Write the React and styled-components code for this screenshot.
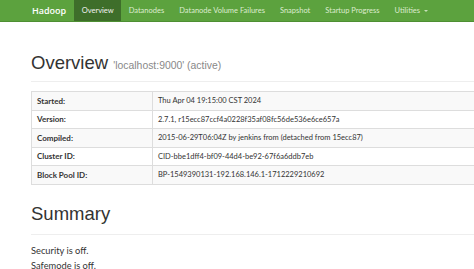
import styled, { createGlobalStyle } from "styled-components";

const Global = createGlobalStyle`
  body {
    margin: 0;
    background: #fff;
    overflow: hidden;
    font-family: Lato, "Open Sans", sans-serif;
  }
`;

const navItems = [
  "Overview",
  "Datanodes",
  "Datanode Volume Failures",
  "Snapshot",
  "Startup Progress",
];

const info = [
  ["Started:", "Thu Apr 04 19:15:00 CST 2024"],
  ["Version:", "2.7.1, r15ecc87ccf4a0228f35af08fc56de536e6ce657a"],
  ["Compiled:", "2015-06-29T06:04Z by jenkins from (detached from 15ecc87)"],
  ["Cluster ID:", "CID-bbe1dff4-bf09-44d4-be92-67f6a6ddb7eb"],
  ["Block Pool ID:", "BP-1549390131-192.168.146.1-1712229210692"],
];

function App() {
  return (
    <>
      <Global />
      <Navbar>
        <Brand>Hadoop</Brand>
        {navItems.map((item, i) => (
          <NavLink key={item} $active={i === 0}>
            {item}
          </NavLink>
        ))}
        <NavLink>
          Utilities <Caret />
        </NavLink>
      </Navbar>
      <Page>
        <PageHeader>
          <Title>
            Overview <small>'localhost:9000' (active)</small>
          </Title>
        </PageHeader>
        <InfoTable>
          <tbody>
            {info.map(([k, v]) => (
              <tr key={k}>
                <th>{k}</th>
                <td>{v}</td>
              </tr>
            ))}
          </tbody>
        </InfoTable>
        <SectionHeader>
          <Title>Summary</Title>
        </SectionHeader>
        <Para>Security is off.</Para>
        <Para>Safemode is off.</Para>
      </Page>
    </>
  );
}

const Navbar = styled.nav`
  display: flex;
  align-items: stretch;
  height: 21px;
  padding-left: 32px;
  background: #5ca23e;
  border-bottom: 1px solid #4e8f33;
`;

const Brand = styled.div`
  display: flex;
  align-items: center;
  margin-right: 8px;
  color: #fff;
  font-family: "Open Sans", sans-serif;
  font-size: 9px;
  font-weight: 600;
  white-space: nowrap;
`;

const NavLink = styled.div`
  display: flex;
  align-items: center;
  padding: 0 7.5px;
  font-size: 7.5px;
  white-space: nowrap;
  color: ${(p) => (p.$active ? "#f2f2f2" : "#dceccf")};
  background: ${(p) => (p.$active ? "#3e6e2a" : "transparent")};
`;

const Caret = styled.span`
  display: inline-block;
  margin-left: 4px;
  border-left: 2.5px solid transparent;
  border-right: 2.5px solid transparent;
  border-top: 2.5px solid #c6dfb8;
`;

const Page = styled.div`
  width: 940px;
  padding-left: 31px;
`;

const PageHeader = styled.div`
  margin-top: 31px;
  padding-bottom: 8px;
  border-bottom: 1px solid #eee;
  margin-bottom: 9px;
`;

const SectionHeader = styled(PageHeader)`
  margin-top: 19px;
  padding-bottom: 10px;
  margin-bottom: 11px;
`;

const Title = styled.h1`
  margin: 0;
  height: 20px;
  font-family: "Liberation Sans", Arial, sans-serif;
  font-weight: 400;
  font-size: 18.5px;
  line-height: 20px;
  color: #333;
  small {
    font-size: 10.4px;
    line-height: 1;
    color: #888;
  }
`;

const InfoTable = styled.table`
  width: 100%;
  border-collapse: collapse;
  font-size: 7.5px;
  color: #333;
  th,
  td {
    height: 17.5px;
    padding: 0 5px;
    border: 1px solid #ddd;
    text-align: left;
    white-space: nowrap;
  }
  th {
    width: 110px;
    font-size: 8px;
    font-weight: 700;
  }
  tr:nth-child(odd) {
    background: #f9f9f9;
  }
`;

const Para = styled.p`
  margin: 0 0 5px;
  font-size: 9.3px;
  line-height: 10px;
  color: #333;
`;

export default App;
